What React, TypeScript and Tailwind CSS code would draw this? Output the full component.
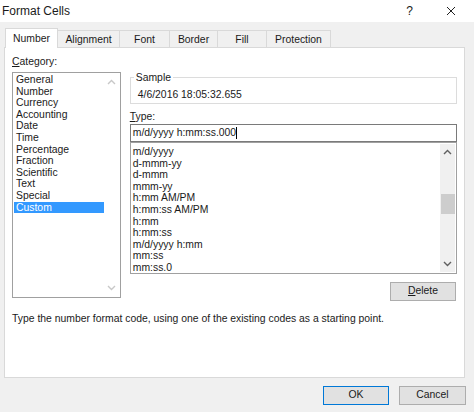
import React from "react";

// ─── Data ─────────────────────────────────────────────────────────────────────

const TABS = ["Number", "Alignment", "Font", "Border", "Fill", "Protection"];
const TAB_WIDTHS = ["w-[53px]", "w-[62px]", "w-[50px]", "w-[48px]", "w-[49px]", "w-[64px]"];

const CATEGORIES = [
  "General",
  "Number",
  "Currency",
  "Accounting",
  "Date",
  "Time",
  "Percentage",
  "Fraction",
  "Scientific",
  "Text",
  "Special",
  "Custom",
];

const FORMATS = [
  "m/d/yyyy",
  "d-mmm-yy",
  "d-mmm",
  "mmm-yy",
  "h:mm AM/PM",
  "h:mm:ss AM/PM",
  "h:mm",
  "h:mm:ss",
  "m/d/yyyy h:mm",
  "mm:ss",
  "mm:ss.0",
];

// ─── Small glyphs ─────────────────────────────────────────────────────────────

function Chevron({ up, color }: { up?: boolean; color: string }) {
  return (
    <svg width="9" height="6" viewBox="0 0 9 6" className="block">
      <polyline
        points={up ? "1,5 4.5,1.5 8,5" : "1,1 4.5,4.5 8,1"}
        fill="none"
        stroke={color}
        strokeWidth="1.4"
      />
    </svg>
  );
}

// ─── Component ────────────────────────────────────────────────────────────────

export default function App(): React.ReactElement {
  return (
    <div className="w-[474px] h-[412px] bg-[#f0f0f0] text-[#1a1a1a] font-['Liberation_Sans',Arial,sans-serif] text-[10.4px] overflow-hidden">
      {/* Title bar */}
      <div className="h-[22px] bg-white flex items-center pl-[2px]">
        <span className="text-[12px] leading-none">Format Cells</span>
        <span className="ml-auto mr-[33px] text-[12px] leading-none">?</span>
        <svg width="10" height="10" viewBox="0 0 10 10" className="mr-[18px]">
          <path d="M1 1 L9 9 M9 1 L1 9" stroke="#222" strokeWidth="1" />
        </svg>
      </div>

      {/* Tabs */}
      <div className="flex items-end h-[25px] pl-[5px]">
        {TABS.map((t, i) => (
          <div
            key={t}
            className={
              i === 0
                ? `${TAB_WIDTHS[i]} h-[20px] bg-white border border-b-0 border-[#d9d9d9] flex items-center justify-center -mb-px relative z-10`
                : `${TAB_WIDTHS[i]} h-[17px] bg-[#f0f0f0] border border-l-0 border-b-0 border-[#d9d9d9] flex items-center justify-center pt-px`
            }
          >
            {t}
          </div>
        ))}
      </div>

      {/* Panel */}
      <div className="ml-[4px] w-[461px] h-[331px] bg-white border border-[#d9d9d9] flex flex-col px-[7px]">
        <div className="flex gap-[9px] pt-[8px]">
          {/* Category column */}
          <div className="w-[109px] flex flex-col">
            <div className="h-[16px] leading-[12px]">
              <span className="underline">C</span>ategory:
            </div>
            <div className="h-[226px] border border-[#a0a0a0] flex">
              <div className="flex-1 flex flex-col pl-[1px] pt-[1px]">
                {CATEGORIES.map((c) => (
                  <div
                    key={c}
                    className={
                      c === "Custom"
                        ? "h-[11.6px] leading-[11.6px] pl-[2px] bg-[#3399ff] text-white"
                        : "h-[11.6px] leading-[11.6px] pl-[2px]"
                    }
                  >
                    {c}
                  </div>
                ))}
              </div>
              <div className="w-[16px] flex flex-col items-center justify-between py-[6px]">
                <Chevron up color="#c8c8c8" />
                <Chevron color="#c8c8c8" />
              </div>
            </div>
          </div>

          {/* Type column */}
          <div className="w-[328px] flex flex-col">
            {/* Sample group */}
            <div className="relative mt-[21px] h-[27px] border border-[#dcdcdc] pt-[10px] pl-[7px]">
              <span className="absolute -top-[7px] left-[3px] bg-white px-[2px] leading-[14px]">Sample</span>
              <div className="leading-[14px]">4/6/2016 18:05:32.655</div>
            </div>

            <div className="mt-[6px] h-[14px] leading-[14px]">
              <span className="underline">T</span>ype:
            </div>
            <div className="h-[18px] border border-[#7a7a7a] pl-[2px] flex items-center">
              <span>m/d/yyyy h:mm:ss.000</span>
              <span className="w-px h-[12px] bg-black" />
            </div>

            {/* Format list */}
            <div className="h-[132px] border border-[#a0a0a0] flex">
              <div className="flex-1 flex flex-col pl-[2px] pt-[3px]">
                {FORMATS.map((f) => (
                  <div key={f} className="h-[11.6px] leading-[11.6px]">
                    {f}
                  </div>
                ))}
              </div>
              <div className="w-[15px] mr-[1px] my-[1px] bg-[#f0f0f0] flex flex-col items-center">
                <div className="h-[16px] flex items-center">
                  <Chevron up color="#606060" />
                </div>
                <div className="mt-[34px] w-[14px] h-[20px] bg-[#cdcdcd]" />
                <div className="mt-auto h-[16px] flex items-center">
                  <Chevron color="#606060" />
                </div>
              </div>
            </div>

            <div className="flex justify-end mt-[8px] pr-[1px]">
              <button className="w-[66px] h-[19px] bg-[#e1e1e1] border border-[#adadad] leading-none">
                <span className="underline">D</span>elete
              </button>
            </div>
          </div>
        </div>

        <div className="mt-[11px] leading-[14px]">
          Type the number format code, using one of the existing codes as a starting point.
        </div>
      </div>

      {/* Footer buttons */}
      <div className="flex justify-end gap-[10px] pr-[8px] mt-[8px]">
        <button className="w-[66px] h-[19px] bg-[#e1e1e1] border border-[#0078d7] leading-none">OK</button>
        <button className="w-[67px] h-[19px] bg-[#e1e1e1] border border-[#adadad] leading-none">Cancel</button>
      </div>
    </div>
  );
}
